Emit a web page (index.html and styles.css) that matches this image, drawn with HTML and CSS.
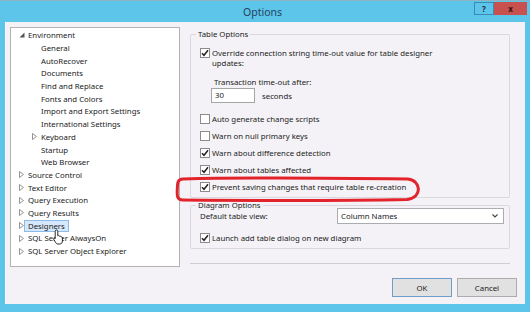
FILE: index.html
```html
<!DOCTYPE html>
<html lang="en">
<head>
    <meta charset="UTF-8">
    <title>Options</title>
    <link rel="stylesheet" href="styles.css">
</head>
<body>
    <div class="window">
        <div class="titlebar">
            <span class="title">Options</span>
            <div class="caption-btns">
                <span class="cap-btn help">?</span>
                <span class="cap-btn close">x</span>
            </div>
        </div>

        <div class="client">
            <div class="main">
                <!-- Options tree -->
                <ul class="tree">
                    <li class="lv0"><span class="arrow"><svg width="6" height="6" viewBox="0 0 6 6"><polygon points="5.5,0.5 5.5,5.5 0.5,5.5" fill="#555"/></svg></span>Environment</li>
                    <li class="lv1"><span class="arrow"></span>General</li>
                    <li class="lv1"><span class="arrow"></span>AutoRecover</li>
                    <li class="lv1"><span class="arrow"></span>Documents</li>
                    <li class="lv1"><span class="arrow"></span>Find and Replace</li>
                    <li class="lv1"><span class="arrow"></span>Fonts and Colors</li>
                    <li class="lv1"><span class="arrow"></span>Import and Export Settings</li>
                    <li class="lv1"><span class="arrow"></span>International Settings</li>
                    <li class="lv1"><span class="arrow"><svg width="5" height="7" viewBox="0 0 5 7"><polygon points="0.5,0.5 4.5,3.5 0.5,6.5" fill="none" stroke="#888" stroke-width="0.9"/></svg></span>Keyboard</li>
                    <li class="lv1"><span class="arrow"></span>Startup</li>
                    <li class="lv1"><span class="arrow"></span>Web Browser</li>
                    <li class="lv0"><span class="arrow"><svg width="5" height="7" viewBox="0 0 5 7"><polygon points="0.5,0.5 4.5,3.5 0.5,6.5" fill="none" stroke="#888" stroke-width="0.9"/></svg></span>Source Control</li>
                    <li class="lv0"><span class="arrow"><svg width="5" height="7" viewBox="0 0 5 7"><polygon points="0.5,0.5 4.5,3.5 0.5,6.5" fill="none" stroke="#888" stroke-width="0.9"/></svg></span>Text Editor</li>
                    <li class="lv0"><span class="arrow"><svg width="5" height="7" viewBox="0 0 5 7"><polygon points="0.5,0.5 4.5,3.5 0.5,6.5" fill="none" stroke="#888" stroke-width="0.9"/></svg></span>Query Execution</li>
                    <li class="lv0"><span class="arrow"><svg width="5" height="7" viewBox="0 0 5 7"><polygon points="0.5,0.5 4.5,3.5 0.5,6.5" fill="none" stroke="#888" stroke-width="0.9"/></svg></span>Query Results</li>
                    <li class="lv0"><span class="arrow"><svg width="5" height="7" viewBox="0 0 5 7"><polygon points="0.5,0.5 4.5,3.5 0.5,6.5" fill="none" stroke="#888" stroke-width="0.9"/></svg></span><span class="sel">Designers</span></li>
                    <li class="lv0"><span class="arrow"><svg width="5" height="7" viewBox="0 0 5 7"><polygon points="0.5,0.5 4.5,3.5 0.5,6.5" fill="none" stroke="#888" stroke-width="0.9"/></svg></span>SQL Server AlwaysOn</li>
                    <li class="lv0"><span class="arrow"><svg width="5" height="7" viewBox="0 0 5 7"><polygon points="0.5,0.5 4.5,3.5 0.5,6.5" fill="none" stroke="#888" stroke-width="0.9"/></svg></span>SQL Server Object Explorer</li>
                </ul>

                <!-- Designer settings -->
                <div class="panel">
                    <fieldset class="group">
                        <legend>Table Options</legend>
                        <label class="check multi"><span class="box"><svg width="8" height="8" viewBox="0 0 8 8"><path d="M1,4.2 L3,6.3 L7,1.2" fill="none" stroke="#222" stroke-width="1.5"/></svg></span><span>Override connection string time-out value for table designer<br>updates:</span></label>
                        <div class="sub-label">Transaction time-out after:</div>
                        <div class="timeout">
                            <span class="num">30</span>
                            <span class="unit">seconds</span>
                        </div>
                        <label class="check first"><span class="box"></span>Auto generate change scripts</label>
                        <label class="check"><span class="box"></span>Warn on null primary keys</label>
                        <label class="check"><span class="box"><svg width="8" height="8" viewBox="0 0 8 8"><path d="M1,4.2 L3,6.3 L7,1.2" fill="none" stroke="#222" stroke-width="1.5"/></svg></span>Warn about difference detection</label>
                        <label class="check"><span class="box"><svg width="8" height="8" viewBox="0 0 8 8"><path d="M1,4.2 L3,6.3 L7,1.2" fill="none" stroke="#222" stroke-width="1.5"/></svg></span>Warn about tables affected</label>
                        <label class="check"><span class="box"><svg width="8" height="8" viewBox="0 0 8 8"><path d="M1,4.2 L3,6.3 L7,1.2" fill="none" stroke="#222" stroke-width="1.5"/></svg></span>Prevent saving changes that require table re-creation</label>
                    </fieldset>

                    <fieldset class="group diagram">
                        <legend>Diagram Options</legend>
                        <div class="view-row">
                            <span>Default table view:</span>
                            <span class="select">Column Names<svg width="6" height="4" viewBox="0 0 6 4"><path d="M0.5,0.5 L3,3 L5.5,0.5" fill="none" stroke="#444" stroke-width="1.1"/></svg></span>
                        </div>
                        <label class="check launch"><span class="box"><svg width="8" height="8" viewBox="0 0 8 8"><path d="M1,4.2 L3,6.3 L7,1.2" fill="none" stroke="#222" stroke-width="1.5"/></svg></span>Launch add table dialog on new diagram</label>
                    </fieldset>

                    <div class="separator"></div>
                </div>
            </div>

            <div class="footer">
                <button class="btn default">OK</button>
                <button class="btn">Cancel</button>
            </div>
        </div>

        <!-- mouse pointer over Designers -->
        <svg class="pointer" width="11" height="16" viewBox="0 0 11 16">
            <path d="M3.5,1 C4.3,1 4.8,1.5 4.8,2.3 L4.8,6.8 C5.4,6.3 6.3,6.5 6.4,7.2 C7.1,6.9 7.9,7.3 8,8 C8.6,7.8 9.4,8.1 9.4,8.9 L9.4,12 C9.4,13.8 8.4,15 6.8,15 L5,15 C3.8,15 3.2,14.4 2.6,13.5 L0.9,10.6 C0.5,9.9 0.8,9.2 1.5,9.1 C1.9,9 2.2,9.3 2.2,9.6 L2.2,2.3 C2.2,1.5 2.7,1 3.5,1 Z" fill="#fff" stroke="#111" stroke-width="0.9"/>
        </svg>

        <!-- red annotation around the prevent saving option -->
        <svg class="annotation" width="530" height="312" viewBox="0 0 530 312">
            <path d="M183,178 C240,176.5 330,177 408,178 C421,179 423,197 407,198.5 C330,200 250,199.5 183,199 C176.5,199 177,194 177.3,188 C177.5,182 177.5,178.2 183,178 Z" fill="none" stroke="#e3232b" stroke-width="3"/>
        </svg>
    </div>
</body>
</html>
```

FILE: styles.css
```css
* { box-sizing: border-box; margin: 0; padding: 0; }
body { background: #fff; font-family: "Noto Sans", sans-serif; font-size: 7.8px; color: #222; }

.window { position: relative; width: 530px; height: 312px; background: #5dc5ea; border-top: 1px solid #8fb2c2; display: flex; flex-direction: column; overflow: hidden; }
.titlebar { position: relative; height: 21px; display: flex; align-items: center; justify-content: center; }
.title { font-size: 10.5px; color: #22445c; padding-right: 5px; }
.caption-btns { position: absolute; top: 1px; right: 3px; display: flex; }
.cap-btn { height: 13px; display: flex; align-items: center; justify-content: center; font-weight: bold; font-size: 8px; }
.help { width: 20px; border: 1px solid #3b8cb5; color: #1d2a3a; }
.close { width: 33px; background: #c8504f; color: #3a1414; }

.client { flex: 1; margin: 0 5px 8px 5px; background: #f4f2f6; border-left: 1px solid #fbfbfd; display: flex; flex-direction: column; }
.main { display: flex; padding: 5px 0 0 4px; }

.tree { width: 170px; height: 240px; background: #fff; border: 1px solid #b3b3b3; list-style: none; padding-top: 1px; }
.tree li { height: 12.7px; display: flex; align-items: center; white-space: nowrap; }
.tree .lv0 { padding-left: 6px; }
.tree .lv1 { padding-left: 19px; }
.arrow { width: 11px; flex: none; display: flex; align-items: center; padding-left: 2px; }
.sel { margin-left: -4px; padding: 0 3px; border: 1px solid #8cbbe9; background: #d6e8fb; line-height: 10px; }

.panel { margin-left: 10px; width: 320px; padding-top: 1px; }
.group { border: 1px solid #dad8dc; border-radius: 2px; padding: 0 5px 2px 9px; }
.group legend { margin-left: -4px; padding: 0 2px; line-height: 12px; }

.check { display: flex; align-items: center; height: 17px; white-space: nowrap; }
.check.multi { align-items: flex-start; height: auto; margin-top: 8px; line-height: 10px; }
.check.first { margin-top: 7px; }
.box { width: 10px; height: 10px; border: 1px solid #8c8c8c; background: #fff; margin-right: 2px; flex: none; display: flex; align-items: center; justify-content: center; }

.sub-label { margin: 8px 0 0 14px; line-height: 12px; }
.timeout { display: flex; align-items: center; margin-left: 11px; height: 15px; }
.num { width: 44px; height: 15px; border: 1px solid #a5a5a5; background: #fff; padding-left: 3px; line-height: 13px; }
.unit { margin-left: 7px; }

.diagram { margin-top: 2px; }
.diagram legend { line-height: 10px; }
.view-row { display: flex; align-items: center; height: 16px; margin-top: -2px; }
.select { margin-left: auto; width: 167px; height: 16px; border: 1px solid #abadb3; background: #fff; display: flex; align-items: center; justify-content: space-between; padding: 0 5px 0 3px; }
.check.launch { margin-top: 5px; }

.separator { height: 1px; margin-top: 14px; background: #d0ced2; }

.footer { display: flex; justify-content: flex-end; gap: 5px; margin-top: 11px; padding-right: 8px; }
.btn { width: 60px; height: 19px; border: 1px solid #acacac; background: #e1e1e1; font: inherit; color: #222; }
.btn.default { border-color: #6f9dc8; }

.pointer { position: absolute; left: 53px; top: 228px; }
.annotation { position: absolute; left: 0; top: 0; pointer-events: none; }
```
